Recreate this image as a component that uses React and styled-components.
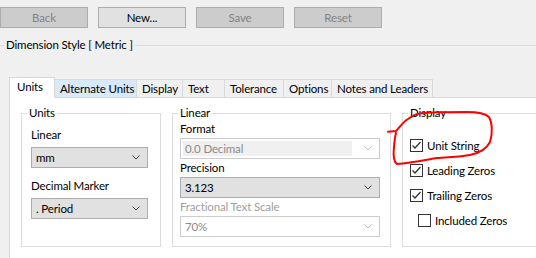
import React from 'react';
import styled, { createGlobalStyle } from 'styled-components';

const GlobalStyle = createGlobalStyle`
  html, body {
    margin: 0;
    padding: 0;
    background: #f0f0f0;
    overflow: hidden;
  }
  body {
    font-family: Lato, "Liberation Sans", sans-serif;
    font-size: 11.5px;
    letter-spacing: -0.15px;
    color: #000;
  }
`;

const tabs = [
  { label: 'Units', width: 46, selected: true },
  { label: 'Alternate Units', width: 82, hover: true },
  { label: 'Display', width: 46 },
  { label: 'Text', width: 42 },
  { label: 'Tolerance', width: 59 },
  { label: 'Options', width: 48 },
  { label: 'Notes and Leaders', width: 101 },
];

const Page = styled.div`
  position: relative;
  width: 536px;
  height: 258px;
  overflow: hidden;
`;

const Toolbar = styled.div`
  display: flex;
  gap: 10px;
  padding-top: 7px;
`;

const Button = styled.button`
  width: 88px;
  height: 21px;
  padding: 0;
  border: 1px solid #adadad;
  background: ${(p) => (p.disabled ? '#cccccc' : '#e1e1e1')};
  color: ${(p) => (p.disabled ? '#838383' : '#000')};
  font: inherit;
  letter-spacing: inherit;
  line-height: 18px;
`;

const StyleBox = styled.fieldset`
  margin: 9px -2px 0;
  padding: 0;
  border: 1px solid #dcdcdc;
  border-bottom: none;

  legend {
    margin-left: 5px;
    padding: 0 2px;
    line-height: 16px;
  }
`;

const StyleBody = styled.div`
  padding: 24px 0 0 10px;
`;

const TabStrip = styled.div`
  display: flex;
  align-items: flex-end;
  height: 20px;
  position: relative;
  z-index: 1;
`;

const Tab = styled.div`
  box-sizing: border-box;
  width: ${(p) => p.$width}px;
  height: ${(p) => (p.$selected ? 21 : 18)}px;
  margin-bottom: ${(p) => (p.$selected ? -1 : 0)}px;
  padding-left: ${(p) => (p.$selected ? 7 : 5)}px;
  padding-top: 1px;
  border: 1px solid #d9d9d9;
  border-bottom: none;
  border-left-width: ${(p) => (p.$first ? 1 : 0)}px;
  background: ${(p) => (p.$selected ? '#ffffff' : p.$hover ? '#d8eaf9' : '#f0f0f0')};
  line-height: 16px;
  white-space: nowrap;
`;

const Panel = styled.div`
  display: flex;
  gap: 11px;
  width: 560px;
  height: 170px;
  padding: 7px 0 0 11px;
  background: #ffffff;
  border-top: 1px solid #d9d9d9;
  border-left: 1px solid #d9d9d9;
`;

const Group = styled.fieldset`
  box-sizing: border-box;
  flex: none;
  width: ${(p) => p.$width}px;
  height: 142px;
  margin: 0;
  padding: 0;
  border: 1px solid #dcdcdc;

  legend {
    margin-left: 5px;
    padding: 0 2px;
    line-height: 16px;
  }
`;

const GroupBody = styled.div`
  padding: ${(p) => p.$pad};
`;

const Label = styled.div`
  line-height: 16px;
  color: ${(p) => (p.$disabled ? '#a0a0a0' : '#000')};
  margin-bottom: ${(p) => p.$gap ?? 1}px;
`;

const Combo = styled.div`
  box-sizing: border-box;
  display: flex;
  align-items: center;
  width: ${(p) => p.$width}px;
  height: 21px;
  padding: 2px 7px 2px 2px;
  margin-bottom: ${(p) => p.$gap ?? 1}px;
  border: 1px solid ${(p) => (p.$disabled ? '#cccccc' : '#adadad')};
  background: ${(p) => (p.$disabled ? '#ffffff' : '#e1e1e1')};
  color: ${(p) => (p.$disabled ? '#8a8a8a' : '#000')};
`;

const ComboText = styled.span`
  flex: 1;
  align-self: stretch;
  display: flex;
  align-items: center;
  padding-left: 2px;
  margin-right: ${(p) => (p.$shaded ? 12 : 0)}px;
  background: ${(p) => (p.$shaded ? '#f0f0f0' : 'transparent')};
`;

const CheckRow = styled.div`
  display: flex;
  align-items: center;
  gap: 4px;
  height: 16px;
  margin-left: ${(p) => (p.$indent ? 8 : 0)}px;
  margin-bottom: 9px;
`;

const Box = styled.span`
  box-sizing: border-box;
  width: 13px;
  height: 13px;
  border: 1px solid #333333;
  background: #ffffff;
  display: flex;
`;

const Annotation = styled.svg`
  position: absolute;
  left: 0;
  top: 0;
  pointer-events: none;
`;

const Chevron = ({ disabled }) => (
  <svg width="8" height="5" viewBox="0 0 8 5">
    <polyline
      points="0.5,0.5 4,4 7.5,0.5"
      fill="none"
      stroke={disabled ? '#bfbfbf' : '#404040'}
      strokeWidth="1"
    />
  </svg>
);

const Select = ({ value, width, disabled, shaded, gap }) => (
  <Combo $width={width} $disabled={disabled} $gap={gap}>
    <ComboText $shaded={shaded}>{value}</ComboText>
    <Chevron disabled={disabled} />
  </Combo>
);

const Check = ({ label, checked, indent }) => (
  <CheckRow $indent={indent}>
    <Box>
      {checked && (
        <svg width="11" height="11" viewBox="0 0 11 11">
          <polyline points="1.5,5.5 4,8 9.5,2" fill="none" stroke="#333" strokeWidth="1.3" />
        </svg>
      )}
    </Box>
    <span>{label}</span>
  </CheckRow>
);

export default function App() {
  return (
    <Page>
      <GlobalStyle />
      <Toolbar>
        <Button disabled>Back</Button>
        <Button>New...</Button>
        <Button disabled>Save</Button>
        <Button disabled>Reset</Button>
      </Toolbar>
      <StyleBox>
        <legend>Dimension Style [ Metric ]</legend>
        <StyleBody>
          <TabStrip>
            {tabs.map((t, i) => (
              <Tab key={t.label} $width={t.width} $selected={t.selected} $hover={t.hover} $first={i === 0}>
                {t.label}
              </Tab>
            ))}
          </TabStrip>
          <Panel>
            <Group $width={140}>
              <legend>Units</legend>
              <GroupBody $pad="6px 9px 0">
                <Label $gap={4}>Linear</Label>
                <Select value="mm" width={117} gap={10} />
                <Label $gap={4}>Decimal Marker</Label>
                <Select value=". Period" width={117} />
              </GroupBody>
            </Group>
            <Group $width={219}>
              <legend>Linear</legend>
              <GroupBody $pad="0 7px">
                <Label>Format</Label>
                <Select value="0.0 Decimal" width={200} disabled shaded />
                <Label>Precision</Label>
                <Select value="3.123" width={200} />
                <Label $disabled>Fractional Text Scale</Label>
                <Select value="70%" width={200} disabled />
              </GroupBody>
            </Group>
            <Group $width={150}>
              <legend>Display</legend>
              <GroupBody $pad="16px 7px 0">
                <Check label="Unit String" checked />
                <Check label="Leading Zeros" checked />
                <Check label="Trailing Zeros" checked />
                <Check label="Included Zeros" indent />
              </GroupBody>
            </Group>
          </Panel>
        </StyleBody>
      </StyleBox>
      <Annotation width="536" height="258" viewBox="0 0 536 258">
        <path
          d="M388 131.7 L396 131 C399 128 403 122 408 119 C412 116 415 114 420 113.5 C430 112 447 112 467 112 C478 112 485 113 489 117 C492 122 493 132 490 142 C487 148 480 153 470 155 C460 157 445 157 437 158 C425 160 410 163 397 164 C394 162 393 156 394 147 C394.5 141 395 137 396 133"
          fill="none"
          stroke="#ff0000"
          strokeWidth="2"
          strokeLinecap="round"
          strokeLinejoin="round"
        />
      </Annotation>
    </Page>
  );
}
